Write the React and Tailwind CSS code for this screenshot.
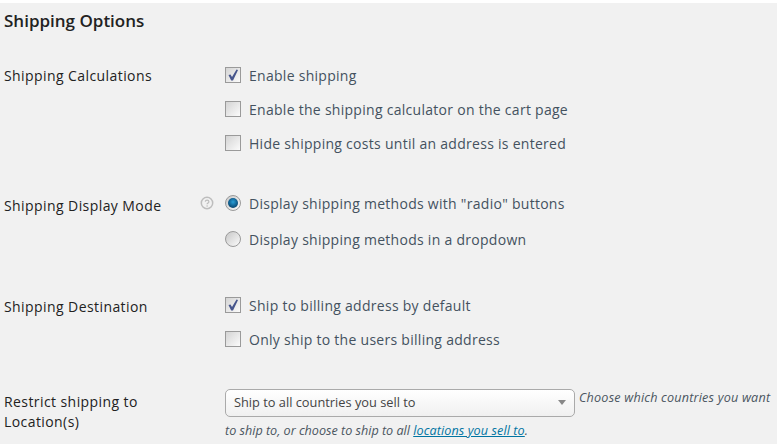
const Check = ({ checked, label, className = "" }) => (
  <label className={`flex items-center h-[20px] ${className}`}>
    <span className="relative w-[16px] h-[16px] border border-[#9a9a9a] bg-gradient-to-br from-[#d4d4d4] to-[#fbfbfb] shrink-0">
      {checked && (
        <svg viewBox="0 0 14 14" className="absolute left-0 top-0 w-[14px] h-[14px]">
          <path d="M2.5 7 L4.5 6.5 L6 9 L10.5 1.5 L12 2 L7 12.5 L5.2 12.5 Z" fill="#46558c" />
        </svg>
      )}
    </span>
    <span className="ml-[8px] text-[14px] tracking-[0.28px] text-[#44525f] whitespace-nowrap">{label}</span>
  </label>
);

const Radio = ({ checked, label, className = "" }) => (
  <label className={`flex items-center h-[20px] ${className}`}>
    <span className="flex items-center justify-center w-[16px] h-[16px] rounded-full border border-[#9a9a9a] bg-gradient-to-br from-[#c8c8c8] to-[#fbfbfb] shrink-0">
      {checked && (
        <span className="w-[10px] h-[10px] rounded-full bg-[radial-gradient(circle_at_50%_40%,#2a9fd6,#0f5c8c_55%,#0b2f4a)]" />
      )}
    </span>
    <span className="ml-[8px] text-[14px] tracking-[0.28px] text-[#44525f] whitespace-nowrap">{label}</span>
  </label>
);

const RowLabel = ({ children, className = "" }) => (
  <div className={`w-[221px] shrink-0 pr-[40px] text-[14px] tracking-[0.42px] leading-[20px] font-medium text-[#222] ${className}`}>
    {children}
  </div>
);

export default function App() {
  return (
    <div className="w-[784px] h-[444px] bg-white overflow-hidden font-['Open_Sans',sans-serif]">
      <div className="w-[777px] h-[441px] mt-[3px] bg-[#f1f1f1] pl-[4px] overflow-hidden">
        <h2 className="text-[17px] leading-[22px] font-semibold text-[#222] pt-[7px] h-[29px]">Shipping Options</h2>

        <div className="flex mt-[33px]">
          <RowLabel className="pt-[1px]">Shipping Calculations</RowLabel>
          <div className="flex flex-col gap-[14px]">
            <Check checked label="Enable shipping" />
            <Check label="Enable the shipping calculator on the cart page" />
            <Check label="Hide shipping costs until an address is entered" />
          </div>
        </div>

        <div className="flex mt-[40px] relative">
          <RowLabel className="pt-[3px]">Shipping Display Mode</RowLabel>
          <svg viewBox="0 0 14 14" className="absolute left-[196px] top-[3px] w-[14px] h-[14px]">
            <circle cx="7" cy="7" r="5.7" fill="none" stroke="#bdbdbd" strokeWidth="1.5" />
            <path d="M5.2 5.6c.2-1 1-1.4 1.9-1.4 1 0 1.8.6 1.8 1.5 0 1.3-1.8 1.3-1.8 2.6" fill="none" stroke="#bdbdbd" strokeWidth="1.2" />
            <circle cx="7.1" cy="10" r=".8" fill="#bdbdbd" />
          </svg>
          <div className="flex flex-col gap-[16px]">
            <Radio checked label={'Display shipping methods with "radio" buttons'} />
            <Radio label="Display shipping methods in a dropdown" />
          </div>
        </div>

        <div className="flex mt-[46px]">
          <RowLabel className="pt-[2px]">Shipping Destination</RowLabel>
          <div className="flex flex-col gap-[14px]">
            <Check checked label="Ship to billing address by default" />
            <Check label="Only ship to the users billing address" />
          </div>
        </div>

        <div className="flex mt-[35px]">
          <RowLabel className="pt-[8px]">Restrict shipping to Location(s)</RowLabel>
          <div className="w-[548px] text-[12.6px] italic text-[#4a5560] leading-[27px]">
            <span className="inline-flex align-[-5px] items-center justify-between w-[350px] h-[28px] px-[8px] rounded-[5px] border border-[#aaa] bg-gradient-to-b from-white to-[#f0f0f0] not-italic text-[12.8px] text-[#444]">
              Ship to all countries you sell to
              <span className="w-0 h-0 border-x-[4px] border-x-transparent border-t-[5px] border-t-[#888]" />
            </span>
            <span className="ml-[4px] tracking-[0.2px]">Choose which countries you want</span>
            <span> to ship to, or choose to ship to all </span>
            <span className="text-[#0074a2] underline tracking-[0.1px]">locations you sell to</span>.
          </div>
        </div>
      </div>
    </div>
  );
}
